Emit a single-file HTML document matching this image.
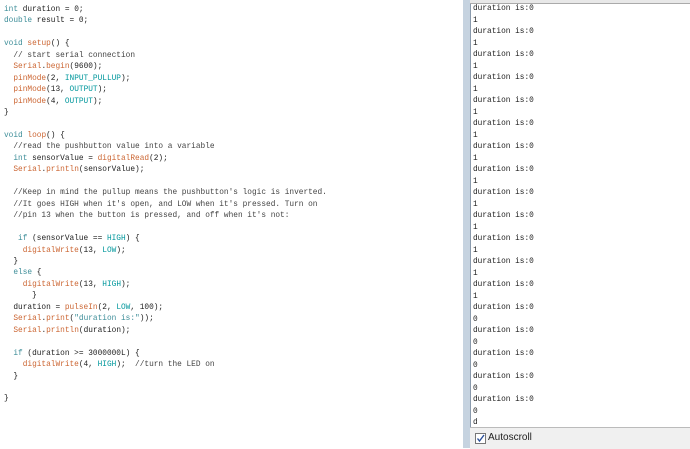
<!DOCTYPE html>
<html><head><meta charset="utf-8"><style>
html,body{margin:0;padding:0;width:690px;height:448px;overflow:hidden;background:#fff;}
pre{margin:0;font-family:"Liberation Mono",monospace;font-size:7.8px;line-height:11.45px;color:#222;}
#ed{position:absolute;left:4px;top:5px;}
.k{color:#3e8e99}.f{color:#cc6633}.c{color:#00979c}.s{color:#3e8e99}.cm{color:#444}
#frame{position:absolute;left:463px;top:0;width:227px;height:448px;background:#c6d3e0;}
#out{position:absolute;left:470px;top:0;width:220px;height:427px;background:#fff;border-left:1px solid #8a9aac;overflow:hidden;}
#out pre{position:absolute;left:2px;top:4px;line-height:11.5px;}
#top{position:absolute;left:470px;top:0;width:220px;height:3px;background:#e8e8e8;border-bottom:1px solid #aaa;}
#bar{position:absolute;left:470px;top:427px;width:220px;height:21px;background:#f0f0f0;border-top:1px solid #bbb;font-family:"Liberation Sans",sans-serif;font-size:10px;color:#222;}
#cb{position:absolute;left:5px;top:5px;width:9px;height:9px;border:1px solid #777;background:#fff;}
#bar span{position:absolute;left:18px;top:4px;}
</style></head><body>
<pre id="ed"><span class="k">int</span> duration = 0;
<span class="k">double</span> result = 0;

<span class="k">void</span> <span class="f">setup</span>() {
  <span class="cm">// start serial connection</span>
  <span class="f">Serial</span>.<span class="f">begin</span>(9600);
  <span class="f">pinMode</span>(2, <span class="c">INPUT_PULLUP</span>);
  <span class="f">pinMode</span>(13, <span class="c">OUTPUT</span>);
  <span class="f">pinMode</span>(4, <span class="c">OUTPUT</span>);
}

<span class="k">void</span> <span class="f">loop</span>() {
  <span class="cm">//read the pushbutton value into a variable</span>
  <span class="k">int</span> sensorValue = <span class="f">digitalRead</span>(2);
  <span class="f">Serial</span>.<span class="f">println</span>(sensorValue);

  <span class="cm">//Keep in mind the pullup means the pushbutton's logic is inverted.</span>
  <span class="cm">//It goes HIGH when it's open, and LOW when it's pressed. Turn on</span>
  <span class="cm">//pin 13 when the button is pressed, and off when it's not:</span>

   <span class="k">if</span> (sensorValue == <span class="c">HIGH</span>) {
    <span class="f">digitalWrite</span>(13, <span class="c">LOW</span>);
  }
  <span class="k">else</span> {
    <span class="f">digitalWrite</span>(13, <span class="c">HIGH</span>);
      }
  duration = <span class="f">pulseIn</span>(2, <span class="c">LOW</span>, 100);
  <span class="f">Serial</span>.<span class="f">print</span>(<span class="s">"duration is:"</span>));
  <span class="f">Serial</span>.<span class="f">println</span>(duration);

  <span class="k">if</span> (duration &gt;= 3000000L) {
    <span class="f">digitalWrite</span>(4, <span class="c">HIGH</span>);  <span class="cm">//turn the LED on</span>
  }

}</pre>
<div id="frame"></div>
<div id="out"><pre>duration is:0
1
duration is:0
1
duration is:0
1
duration is:0
1
duration is:0
1
duration is:0
1
duration is:0
1
duration is:0
1
duration is:0
1
duration is:0
1
duration is:0
1
duration is:0
1
duration is:0
1
duration is:0
0
duration is:0
0
duration is:0
0
duration is:0
0
duration is:0
0
d</pre></div>
<div id="top"></div>
<div id="bar"><div id="cb"><svg width="9" height="9" viewBox="0 0 9 9"><path d="M1.5 4.5 L3.5 7 L8 1" stroke="#2a4f9a" stroke-width="1.4" fill="none"/></svg></div><span>Autoscroll</span></div>
</body></html>
